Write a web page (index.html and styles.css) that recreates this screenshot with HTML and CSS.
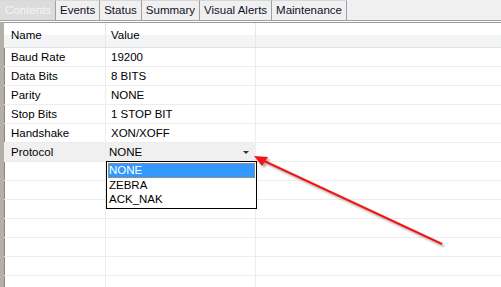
FILE: index.html
```html
<!DOCTYPE html>
<html lang="en">
<head>
  <meta charset="UTF-8">
  <title>Printer Settings</title>
  <link rel="stylesheet" href="styles.css">
</head>
<body>
  <!-- Tab strip -->
  <div class="tabs">
    <div class="tab active">Contents</div>
    <div class="tab">Events</div>
    <div class="tab">Status</div>
    <div class="tab">Summary</div>
    <div class="tab">Visual Alerts</div>
    <div class="tab">Maintenance</div>
  </div>

  <!-- Property grid -->
  <div class="panel">
    <div class="row head">
      <div class="cell name">Name</div>
      <div class="cell value">Value</div>
      <div class="cell rest"></div>
    </div>
    <div class="row">
      <div class="cell name">Baud Rate</div>
      <div class="cell value">19200</div>
      <div class="cell rest"></div>
    </div>
    <div class="row">
      <div class="cell name">Data Bits</div>
      <div class="cell value">8 BITS</div>
      <div class="cell rest"></div>
    </div>
    <div class="row">
      <div class="cell name">Parity</div>
      <div class="cell value">NONE</div>
      <div class="cell rest"></div>
    </div>
    <div class="row">
      <div class="cell name">Stop Bits</div>
      <div class="cell value">1 STOP BIT</div>
      <div class="cell rest"></div>
    </div>
    <div class="row">
      <div class="cell name">Handshake</div>
      <div class="cell value">XON/XOFF</div>
      <div class="cell rest"></div>
    </div>
    <div class="row editing">
      <div class="cell name">Protocol</div>
      <div class="cell value combo">
        <span>NONE</span>
        <span class="caret"></span>
        <!-- open list of the combo -->
        <ul class="droplist">
          <li class="selected">NONE</li>
          <li>ZEBRA</li>
          <li>ACK_NAK</li>
        </ul>
      </div>
      <div class="cell rest"></div>
    </div>
    <div class="row"><div class="cell name"></div><div class="cell value"></div><div class="cell rest"></div></div>
    <div class="row"><div class="cell name"></div><div class="cell value"></div><div class="cell rest"></div></div>
    <div class="row"><div class="cell name"></div><div class="cell value"></div><div class="cell rest"></div></div>
    <div class="row"><div class="cell name"></div><div class="cell value"></div><div class="cell rest"></div></div>
    <div class="row"><div class="cell name"></div><div class="cell value"></div><div class="cell rest"></div></div>
    <div class="row"><div class="cell name"></div><div class="cell value"></div><div class="cell rest"></div></div>
    <div class="row"><div class="cell name"></div><div class="cell value"></div><div class="cell rest"></div></div>
  </div>

  <!-- Annotation arrow -->
  <svg class="callout" width="501" height="287" viewBox="0 0 501 287">
    <defs>
      <filter id="shadow" x="-10%" y="-10%" width="130%" height="130%">
        <feDropShadow dx="2" dy="2" stdDeviation="1" flood-color="#000" flood-opacity="0.35"/>
      </filter>
    </defs>
    <g filter="url(#shadow)">
      <line x1="442" y1="244" x2="262" y2="160" stroke="#f01818" stroke-width="2"/>
      <polygon points="254,156 268,157 262,166" fill="#f01818"/>
    </g>
  </svg>
</body>
</html>
```

FILE: styles.css
```css
body {
  margin: 0;
  width: 501px;
  height: 287px;
  overflow: hidden;
  background: #fff;
  font-family: "Liberation Sans", Arial, sans-serif;
  color: #000;
  position: relative;
}
/* Tabs */
.tabs {
  display: flex;
  height: 20px;
  background: #f0f0f0;
  border-bottom: 1px solid #a0a0a0;
}
.tab {
  font-size: 11.5px;
  line-height: 19px;
  padding: 0 4px 0 4px;
  border-right: 1px solid #a0a0a0;
  border-top: 1px solid #d8d8d8;
  background: #f0f0f0;
  color: #10102a;
}
.tab.active {
  background: #dcdcdc;
  color: #f4f4f4;
  padding-left: 5px;
}
/* Grid */
.panel {
  margin-top: 1px;
  border-top: 1px solid #9a9a9a;
  border-left: 4px solid #b4b0a8;
  box-shadow: inset 1px 0 0 #8a8680;
  font-size: 11.5px;
}
.row {
  display: grid;
  grid-template-columns: 102px 150px 1fr;
  height: 19px;
  box-sizing: border-box;
  border-bottom: 1px solid #ededed;
}
.row.head {
  height: 25px;
  border-bottom: 1px solid #e2e2e2;
  background: linear-gradient(#ffffff 0, #ffffff 50%, #f4f5f7 50%, #f4f5f7 100%);
}
.cell {
  box-sizing: border-box;
  border-right: 1px solid #ededed;
  line-height: 18px;
  white-space: nowrap;
}
.head .cell {
  line-height: 24px;
  border-right-color: #e6e6e6;
}
.cell.name {
  padding-left: 7px;
}
.cell.value {
  padding-left: 5px;
}
.cell.rest {
  border-right: none;
}
.row.editing .name,
.row.editing .value {
  background: #f0f0f0;
}
.combo {
  position: relative;
  padding-left: 3px !important;
}
.caret {
  position: absolute;
  right: 6px;
  top: 8px;
  width: 0;
  height: 0;
  border-left: 3px solid transparent;
  border-right: 3px solid transparent;
  border-top: 3px solid #333;
}
/* Drop list */
.droplist {
  position: absolute;
  top: 18px;
  left: 0;
  width: 151px;
  box-sizing: border-box;
  margin: 0;
  padding: 1px;
  list-style: none;
  background: #fff;
  border: 1px solid #000;
  z-index: 2;
}
.droplist li {
  height: 14.5px;
  line-height: 14px;
  padding-left: 1px;
  font-size: 11.5px;
}
.droplist li.selected {
  background: #3399ff;
  color: #fff;
  outline: 1px dotted #e0842a;
  outline-offset: -1px;
}
.callout {
  position: absolute;
  left: 0;
  top: 0;
  pointer-events: none;
  z-index: 3;
}
```
